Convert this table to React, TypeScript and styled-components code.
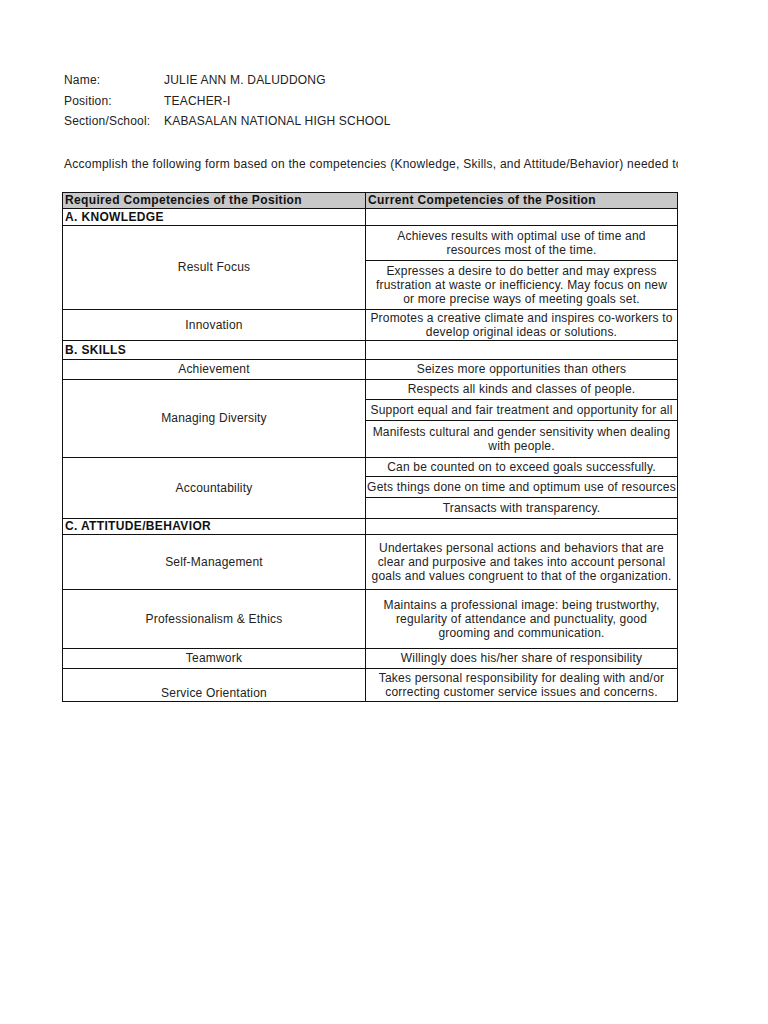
import React from "react";
import styled, { createGlobalStyle } from "styled-components";

const GlobalStyle = createGlobalStyle`
  html, body { margin: 0; padding: 0; background: #ffffff; }
  body { font-family: "Liberation Sans", Arial, sans-serif; color: #222; }
`;

const Page = styled.div`
  width: 616px;
  padding: 70px 0 0 62px;
  overflow: hidden;
  font-size: 12px;
  letter-spacing: 0.2px;
`;

const InfoGrid = styled.div`
  display: grid;
  grid-template-columns: 100px auto;
  grid-auto-rows: 20.5px;
  align-items: center;
  padding-left: 2px;
`;

const InfoText = styled.div`
  line-height: 14px;
  white-space: nowrap;
`;

const Intro = styled.div`
  margin-top: 25px;
  padding-left: 2px;
  line-height: 14px;
  white-space: nowrap;
  letter-spacing: 0.25px;
`;

const Table = styled.table`
  margin-top: 21px;
  border-collapse: collapse;
  table-layout: fixed;
  width: 615px;
  font-size: 12px;
`;

const Row = styled.tr<{ $h: number }>`
  height: ${(p) => p.$h}px;
`;

const HeadCell = styled.th`
  background: #c8c8c8;
  border: 1px solid #111;
  text-align: left;
  font-weight: bold;
  padding: 0 2px;
  line-height: 14px;
  letter-spacing: 0.35px;
  color: #111;
  white-space: nowrap;
`;

const SectionCell = styled.td`
  border: 1px solid #111;
  font-weight: bold;
  padding: 0 2px;
  line-height: 14px;
  letter-spacing: 0.35px;
  color: #111;
`;

const Cell = styled.td<{ $valign?: string; $tight?: boolean }>`
  border: 1px solid #111;
  text-align: center;
  vertical-align: ${(p) => p.$valign || "middle"};
  padding: ${(p) => (p.$tight ? "0" : "0 2px")};
  padding-bottom: ${(p) => (p.$valign === "bottom" ? "1px" : "0")};
  line-height: 14px;
  white-space: nowrap;
  overflow: visible;
`;

type Sub = { text: React.ReactNode; h: number; tight?: boolean };
type Item = { name: string; subs: Sub[]; valign?: string };
type Section = { title: string; items: Item[] };

const sections: Section[] = [
  {
    title: "A. KNOWLEDGE",
    items: [
      {
        name: "Result Focus",
        subs: [
          {
            h: 35,
            text: (
              <>
                Achieves results with optimal use of time and
                <br />
                resources most of the time.
              </>
            ),
          },
          {
            h: 49,
            text: (
              <>
                Expresses a desire to do better and may express
                <br />
                frustration at waste or inefficiency. May focus on new
                <br />
                or more precise ways of meeting goals set.
              </>
            ),
          },
        ],
      },
      {
        name: "Innovation",
        subs: [
          {
            h: 31,
            tight: true,
            text: (
              <>
                Promotes a creative climate and inspires co-workers to
                <br />
                develop original ideas or solutions.
              </>
            ),
          },
        ],
      },
    ],
  },
  {
    title: "B. SKILLS",
    items: [
      {
        name: "Achievement",
        subs: [{ h: 20, text: "Seizes more opportunities than others" }],
      },
      {
        name: "Managing Diversity",
        subs: [
          { h: 20, text: "Respects all kinds and classes of people." },
          {
            h: 21,
            tight: true,
            text: "Support equal and fair treatment and opportunity for all",
          },
          {
            h: 37,
            text: (
              <>
                Manifests cultural and gender sensitivity when dealing
                <br />
                with people.
              </>
            ),
          },
        ],
      },
      {
        name: "Accountability",
        subs: [
          { h: 19, text: "Can be counted on to exceed goals successfully." },
          {
            h: 21,
            tight: true,
            text: "Gets things done on time and optimum use of resources",
          },
          { h: 21, text: "Transacts with transparency." },
        ],
      },
    ],
  },
  {
    title: "C. ATTITUDE/BEHAVIOR",
    items: [
      {
        name: "Self-Management",
        subs: [
          {
            h: 55,
            tight: true,
            text: (
              <>
                Undertakes personal actions and behaviors that are
                <br />
                clear and purposive and takes into account personal
                <br />
                goals and values congruent to that of the organization.
              </>
            ),
          },
        ],
      },
      {
        name: "Professionalism & Ethics",
        subs: [
          {
            h: 59,
            text: (
              <>
                Maintains a professional image: being trustworthy,
                <br />
                regularity of attendance and punctuality, good
                <br />
                grooming and communication.
              </>
            ),
          },
        ],
      },
      {
        name: "Teamwork",
        subs: [{ h: 20, text: "Willingly does his/her share of responsibility" }],
      },
      {
        name: "Service Orientation",
        valign: "bottom",
        subs: [
          {
            h: 33,
            text: (
              <>
                Takes personal responsibility for dealing with and/or
                <br />
                correcting customer service issues and concerns.
              </>
            ),
          },
        ],
      },
    ],
  },
];

const sectionHeights: Record<string, number> = {
  "A. KNOWLEDGE": 17,
  "B. SKILLS": 19,
  "C. ATTITUDE/BEHAVIOR": 16,
};

export default function App() {
  return (
    <>
      <GlobalStyle />
      <Page>
        <InfoGrid>
          <InfoText>Name:</InfoText>
          <InfoText>JULIE ANN M. DALUDDONG</InfoText>
          <InfoText>Position:</InfoText>
          <InfoText>TEACHER-I</InfoText>
          <InfoText>Section/School:</InfoText>
          <InfoText>KABASALAN NATIONAL HIGH SCHOOL</InfoText>
        </InfoGrid>
        <Intro>
          Accomplish the following form based on the competencies (Knowledge,
          Skills, and Attitude/Behavior) needed to perform the job.
        </Intro>
        <Table>
          <colgroup>
            <col style={{ width: 303 }} />
            <col style={{ width: 312 }} />
          </colgroup>
          <tbody>
            <Row $h={16}>
              <HeadCell>Required Competencies of the Position</HeadCell>
              <HeadCell>Current Competencies of the Position</HeadCell>
            </Row>
            {sections.map((s) => (
              <React.Fragment key={s.title}>
                <Row $h={sectionHeights[s.title]}>
                  <SectionCell>{s.title}</SectionCell>
                  <SectionCell />
                </Row>
                {s.items.map((it) =>
                  it.subs.map((sub, i) => (
                    <Row $h={sub.h} key={it.name + i}>
                      {i === 0 && (
                        <Cell rowSpan={it.subs.length} $valign={it.valign}>
                          {it.name}
                        </Cell>
                      )}
                      <Cell $tight={sub.tight}>{sub.text}</Cell>
                    </Row>
                  ))
                )}
              </React.Fragment>
            ))}
          </tbody>
        </Table>
      </Page>
    </>
  );
}
